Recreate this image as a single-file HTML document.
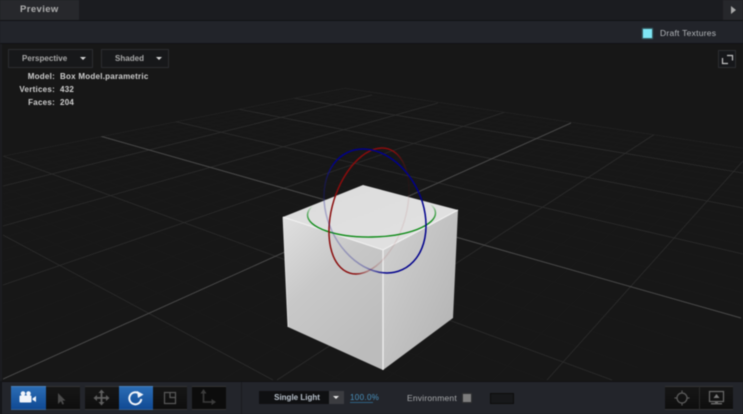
<!DOCTYPE html>
<html><head><meta charset="utf-8"><style>
html,body{margin:0;padding:0;background:#1c1d21}
#r{position:relative;width:743px;height:414px;overflow:hidden;background:#1c1d21;font-family:"Liberation Sans",sans-serif;filter:blur(.4px)}
#r div{position:absolute;box-sizing:border-box}
.t{white-space:nowrap;font-size:8px;font-weight:bold;letter-spacing:.25px;color:#cfcfcf;line-height:10px}
.dd{border:1px solid #2b2c30;background:#17181a;color:#a9a9a9;height:19px;top:49px;line-height:17px;font-size:8px;font-weight:bold;letter-spacing:.03px}
.btn{background:linear-gradient(#161616,#0e0e0e);border-top:1px solid #333;border-bottom:1px solid #333;top:386px;height:24px}
.on{background:linear-gradient(#2b6cb4,#104a94);border-top:1px solid #4a7fb8;border-bottom:1px solid #345f90}
svg{position:absolute;left:0;top:0}
</style></head><body><div id="r">
<div style="left:0;top:0;width:743px;height:21px;background:#1b1c20"></div>
<div style="left:0;top:0;width:79px;height:21px;background:#27282c"></div>
<div class="t" style="left:20px;top:4px;font-size:9.5px;letter-spacing:.4px;color:#aeaeae;line-height:12px">Preview</div>
<div style="left:723px;top:0;width:20px;height:20px;background:#26272b"></div>
<div style="left:0;top:20px;width:743px;height:1px;background:#111214"></div>
<div style="left:0;top:21px;width:743px;height:23px;background:#22242a"></div>
<div style="left:0;top:43px;width:743px;height:1px;background:#111214"></div>
<div style="left:643px;top:29px;width:9px;height:9px;background:#7fe6f4;box-shadow:0 0 1px 1px #3d6a72"></div>
<div class="t" style="left:660px;top:28px;font-weight:normal;letter-spacing:.25px;font-size:8.5px;color:#b4b7bb">Draft Textures</div>

<div style="left:2px;top:44px;width:741px;height:337px;background:#171717"></div>

<svg width="743" height="414" viewBox="0 0 743 414">
<defs>
<clipPath id="c"><polygon points="3,156 345,88 743,148 743,381 3,381"/></clipPath>
<linearGradient id="cl" x1="0" y1="0" x2=".6" y2="1"><stop offset="0" stop-color="#e0e0e0"/><stop offset=".45" stop-color="#c8c8c8"/><stop offset="1" stop-color="#bcbcbc"/></linearGradient>
<linearGradient id="cr" x1="0" y1="0" x2="1" y2="1"><stop offset="0" stop-color="#d2d2d2"/><stop offset="1" stop-color="#b0b0b0"/></linearGradient>
<linearGradient id="ct" x1="0" y1="0" x2="1" y2="1"><stop offset="0" stop-color="#dcdcdc"/><stop offset="1" stop-color="#e2e2e2"/></linearGradient>
<linearGradient id="gb" gradientUnits="userSpaceOnUse" x1="0" y1="-47" x2="0" y2="47"><stop offset="0" stop-color="#00008c"/><stop offset=".68" stop-color="#00008c"/><stop offset=".84" stop-color="#1a1a90" stop-opacity=".38"/><stop offset="1" stop-color="#1a1a90" stop-opacity=".28"/></linearGradient>
<linearGradient id="gr" gradientUnits="userSpaceOnUse" x1="0" y1="-37" x2="0" y2="37"><stop offset="0" stop-color="#8a1010" stop-opacity=".08"/><stop offset=".12" stop-color="#8a1010" stop-opacity=".1"/><stop offset=".26" stop-color="#8a1010" stop-opacity=".35"/><stop offset=".42" stop-color="#8a0c0c"/><stop offset="1" stop-color="#8a0c0c"/></linearGradient>
<linearGradient id="gg" gradientUnits="userSpaceOnUse" x1="0" y1="-22" x2="0" y2="22"><stop offset="0" stop-color="#0a8a14" stop-opacity="0"/><stop offset=".3" stop-color="#0a8a14" stop-opacity="0"/><stop offset=".45" stop-color="#0a8a14" stop-opacity=".6"/><stop offset=".7" stop-color="#0a8a14"/><stop offset="1" stop-color="#0a8a14"/></linearGradient>
</defs>
<g clip-path="url(#c)" fill="none">
<g id="fine" stroke="#1c1c1c" stroke-width=".5"></g>
<g stroke="#2d2d2d" stroke-width=".8">
<line x1="3" y1="156" x2="345" y2="88"/>
<line x1="345" y1="88" x2="743" y2="148"/>
<line x1="287" y1="97" x2="743" y2="173"/>
<line x1="233" y1="108" x2="743" y2="208"/>
<line x1="173" y1="121" x2="743" y2="254"/>
<line x1="3" y1="156" x2="612" y2="380"/>
<line x1="3" y1="235" x2="273" y2="380"/>
<line x1="3" y1="186" x2="372" y2="95"/>
<line x1="3" y1="226" x2="438" y2="103"/>
<line x1="3" y1="285" x2="505" y2="112"/>
<line x1="277" y1="380" x2="655" y2="134"/>
<line x1="547" y1="380" x2="743" y2="161"/>
</g>
<g stroke="#4a4a4a" stroke-width="1">
<line x1="100" y1="136" x2="741" y2="318"/>
<line x1="3" y1="379" x2="571" y2="123"/>
</g>
</g>

<polygon points="363,185 458,210 383,250 283,217" fill="url(#ct)"/>
<polygon points="283,217 383,250 383,370 288,327" fill="url(#cl)"/>
<polygon points="383,250 458,210 453,318 383,370" fill="url(#cr)"/>
<polyline points="283,217 383,250 458,210" fill="none" stroke="#f2f2f2" stroke-width="1"/>
<line x1="383" y1="250" x2="383" y2="370" stroke="#efefef" stroke-width="1.3"/>
<line x1="283" y1="217" x2="288" y2="327" stroke="#e6e6e6" stroke-width=".8"/>

<g fill="none">
<ellipse cx="0" cy="0" rx="64" ry="23" transform="translate(371.5,214) rotate(-1)" stroke="url(#gg)" stroke-width="1.4"/>
<ellipse cx="0" cy="0" rx="65" ry="36.7" transform="translate(369,211) rotate(107.3)" stroke="url(#gr)" stroke-width="1.5"/>
<ellipse cx="0" cy="0" rx="64.7" ry="47.5" transform="translate(375,211) rotate(64.9)" stroke="url(#gb)" stroke-width="1.5"/>
</g>

<!-- top right arrow -->
<polygon points="731,6 736,10 731,14" fill="#a8a8a8"/>
<!-- expand -->
<rect x="718.5" y="50.5" width="17" height="17" fill="#16171a" stroke="#2c2d31"/>
<path d="M727 55.5h5.5v5M722.5 58v5.5h5.500" fill="none" stroke="#c4c4c4" stroke-width="1.2"/>
</svg>

<div class="dd" style="left:8px;width:85px;padding-left:13px">Perspective</div>
<div class="dd" style="left:101px;width:68px;padding-left:13px">Shaded</div>
<svg width="743" height="80" style="pointer-events:none"><polygon points="80,57 86,57 83,60" fill="#d5d5d5"/><polygon points="156,57 162,57 159,60" fill="#d5d5d5"/></svg>

<div class="t" style="left:0;top:72px;width:55px;text-align:right">Model:</div><div class="t" style="left:60px;top:72px">Box Model.parametric</div>
<div class="t" style="left:0;top:85px;width:55px;text-align:right">Vertices:</div><div class="t" style="left:60px;top:85px">432</div>
<div class="t" style="left:0;top:98px;width:55px;text-align:right">Faces:</div><div class="t" style="left:60px;top:98px">204</div>

<div style="left:0;top:381px;width:743px;height:33px;background:#23252b;border-top:1px solid #101113"></div>
<div style="left:0;top:381px;width:2px;height:33px;background:#141518"></div>
<div style="left:241px;top:382px;width:1px;height:32px;background:#1a1b1f"></div>

<div class="btn on" style="left:11px;width:35px"></div>
<div class="btn" style="left:46px;width:34px"></div>
<div class="btn" style="left:85px;width:34px"></div>
<div class="btn on" style="left:119px;width:34px"></div>
<div class="btn" style="left:153px;width:34px"></div>
<div class="btn" style="left:192px;width:34px;background:#0c0c0c"></div>

<div style="left:259px;top:391px;width:72px;height:13px;background:#0f1012"></div>
<div class="t" style="left:259px;top:393px;width:76px;text-align:center;font-size:8px;letter-spacing:0;color:#b9c2cc">Single Light</div>
<div style="left:329px;top:391px;width:15px;height:13px;background:#3b3c40"></div>
<div class="t" style="left:350px;top:393px;font-weight:normal;letter-spacing:.35px;color:#4a93bf;text-decoration:none">100.0%</div>
<div style="left:350px;top:402px;width:23px;height:1px;background:#2e5f80"></div>
<div class="t" style="left:407px;top:393px;font-weight:normal;font-size:8.5px;letter-spacing:.2px;color:#a7a9ab">Environment</div>
<div style="left:463px;top:394px;width:8px;height:8px;background:#7d7d7d;box-shadow:0 0 1px 1px #333"></div>
<div style="left:490px;top:393px;width:24px;height:11px;background:#17181a;border:1px solid #0c0c0c"></div>

<div class="btn" style="left:665px;width:34px"></div>
<div class="btn" style="left:699px;width:34px;border-left:1px solid #2a2a2a"></div>

<svg width="743" height="414">
<polygon points="333,396 339,396 336,399" fill="#e5e5e5"/>
<!-- camera -->
<g fill="#f2f5fa"><circle cx="23" cy="393.5" r="2.3"/><circle cx="28.5" cy="393.5" r="2.3"/><rect x="19.5" y="395.5" width="12" height="7" rx="1"/><polygon points="32.5,398.5 36,396 36,402 32.500,399.8"/></g>
<!-- pointer -->
<polygon points="58,393 58,404 60.8,401.3 62.5,404.6 64,403.8 62.5,400.6 65.5,400.6" fill="#4a4a4a"/>
<!-- move -->
<g fill="#5e5e5e"><rect x="95" y="397" width="13" height="1.8"/><rect x="100.6" y="391" width="1.8" height="13"/>
<polygon points="101.5,389.5 98.5,393 104.5,393"/><polygon points="101.5,405.5 98.5,402 104.5,402"/><polygon points="93.5,398 97,395 97,401"/><polygon points="109.5,398 106,395 106,401"/></g>
<!-- rotate -->
<path d="M138.5 393.2A6 6 0 1 0 141.3 399" fill="none" stroke="#f2f5fa" stroke-width="2"/>
<polygon points="137,391 143.5,394.5 138,398" fill="#f2f5fa"/>
<!-- box -->
<rect x="164.5" y="392.5" width="11" height="11" fill="none" stroke="#5a5a5a" stroke-width="1.2"/>
<path d="M170 392.5v5h5.5" fill="none" stroke="#5a5a5a" stroke-width="1.2"/>
<!-- axes -->
<path d="M203.5 392v10h10" fill="none" stroke="#3b3b3b" stroke-width="1.6"/>
<polygon points="203.5,389 200.5,393.5 206.5,393.5" fill="#3b3b3b"/><polygon points="216,402 211.5,399 211.5,405" fill="#3b3b3b"/>
<!-- target -->
<circle cx="682" cy="398" r="5" fill="none" stroke="#5a5a5a" stroke-width="1.3"/>
<path d="M682 390.5v3M682 402.5v3M674.5 398h3M686.5 398h3" stroke="#5a5a5a" stroke-width="1.2"/>
<!-- monitor -->
<rect x="709.5" y="391.5" width="14" height="10" fill="none" stroke="#6a6a6a" stroke-width="1.2"/>
<polygon points="716.5,394 713.5,398 719.5,398" fill="#7a7a7a"/>
<rect x="711" y="403" width="11" height="1.4" fill="#6a6a6a"/><rect x="715" y="401.5" width="3" height="2" fill="#6a6a6a"/>
</svg>
</div>
<script>
(function(){
var L=[[345,88,743,148],[287,97,743,173],[233,108,743,208],[173,121,743,254],[100,136,741,318],[3,156,612,380],[3,235,273,380]];
var R=[[3,156,345,88],[3,186,372,95],[3,226,438,103],[3,285,505,112],[3,379,571,123],[277,380,655,134],[547,380,743,161]];
var g=document.getElementById('fine'),s='';
[L,R].forEach(function(F){
for(var i=0;i<F.length-1;i++){for(var k=1;k<5;k++){var t=k/5,a=F[i],b=F[i+1],p=[];
for(var j=0;j<4;j++)p.push((a[j]+(b[j]-a[j])*t).toFixed(1));
s+='<line x1="'+p[0]+'" y1="'+p[1]+'" x2="'+p[2]+'" y2="'+p[3]+'"/>';}}
});
g.innerHTML=s;
})();
</script>
</body></html>
